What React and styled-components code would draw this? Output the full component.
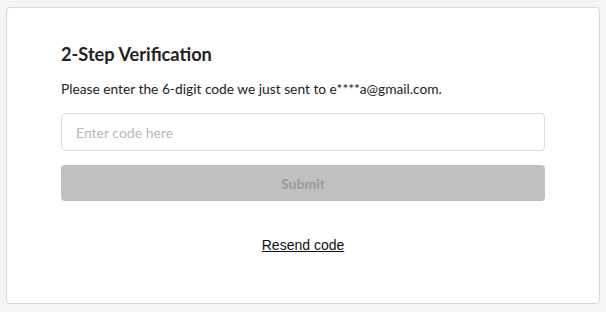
import React from 'react'
import { styled, createGlobalStyle } from 'styled-components';

const Global = createGlobalStyle`
    html, body {
        margin: 0;
        padding: 0;
        background: #f5f5f5;
    }
    body {
        font-family: Lato, "Liberation Sans", sans-serif;
    }
`;

const Page = styled.div`
    padding: 7px 6px 8px 6px;
`;

const Card = styled.div`
    box-sizing: border-box;
    width: 594px;
    height: 297px;
    background: #ffffff;
    border: 1px solid #d8d8d8;
    border-radius: 4px;
    padding: 35px 54px 0 54px;
    display: flex;
    flex-direction: column;
`;

const Title = styled.h2`
    margin: 0;
    font-size: 18.2px;
    line-height: 22px;
    font-weight: 700;
    color: #222;
`;

const Text = styled.p`
    margin: 15px 0 0 0;
    font-size: 13.75px;
    line-height: 18px;
    color: #222;
`;

const Input = styled.input`
    box-sizing: border-box;
    margin-top: 15px;
    height: 38px;
    width: 100%;
    border: 1px solid #dcdcdc;
    border-radius: 4px;
    padding: 0 14px;
    font-family: Lato, sans-serif;
    font-size: 14px;
    color: #222;
    outline: none;
    &::placeholder {
        color: #b8b8b8;
    }
`;

const Button = styled.button`
    margin-top: 14px;
    height: 36px;
    width: 100%;
    border: none;
    border-radius: 4px;
    background: #c0c0c0;
    color: #9a9a9a;
    font-family: Lato, sans-serif;
    font-weight: 700;
    font-size: 14px;
`;

const Resend = styled.a`
    align-self: center;
    margin-top: 36px;
    font-family: "Liberation Sans", Arial, sans-serif;
    font-size: 14px;
    color: #111;
    text-decoration: underline;
    cursor: pointer;
`;

function App() {
    return (
        <>
            <Global />
            <Page>
                <Card>
                    <Title>2-Step Verification</Title>
                    <Text>Please enter the 6-digit code we just sent to e****a@gmail.com.</Text>
                    <Input placeholder="Enter code here" />
                    <Button disabled>Submit</Button>
                    <Resend>Resend code</Resend>
                </Card>
            </Page>
        </>
    )
}

export default App
